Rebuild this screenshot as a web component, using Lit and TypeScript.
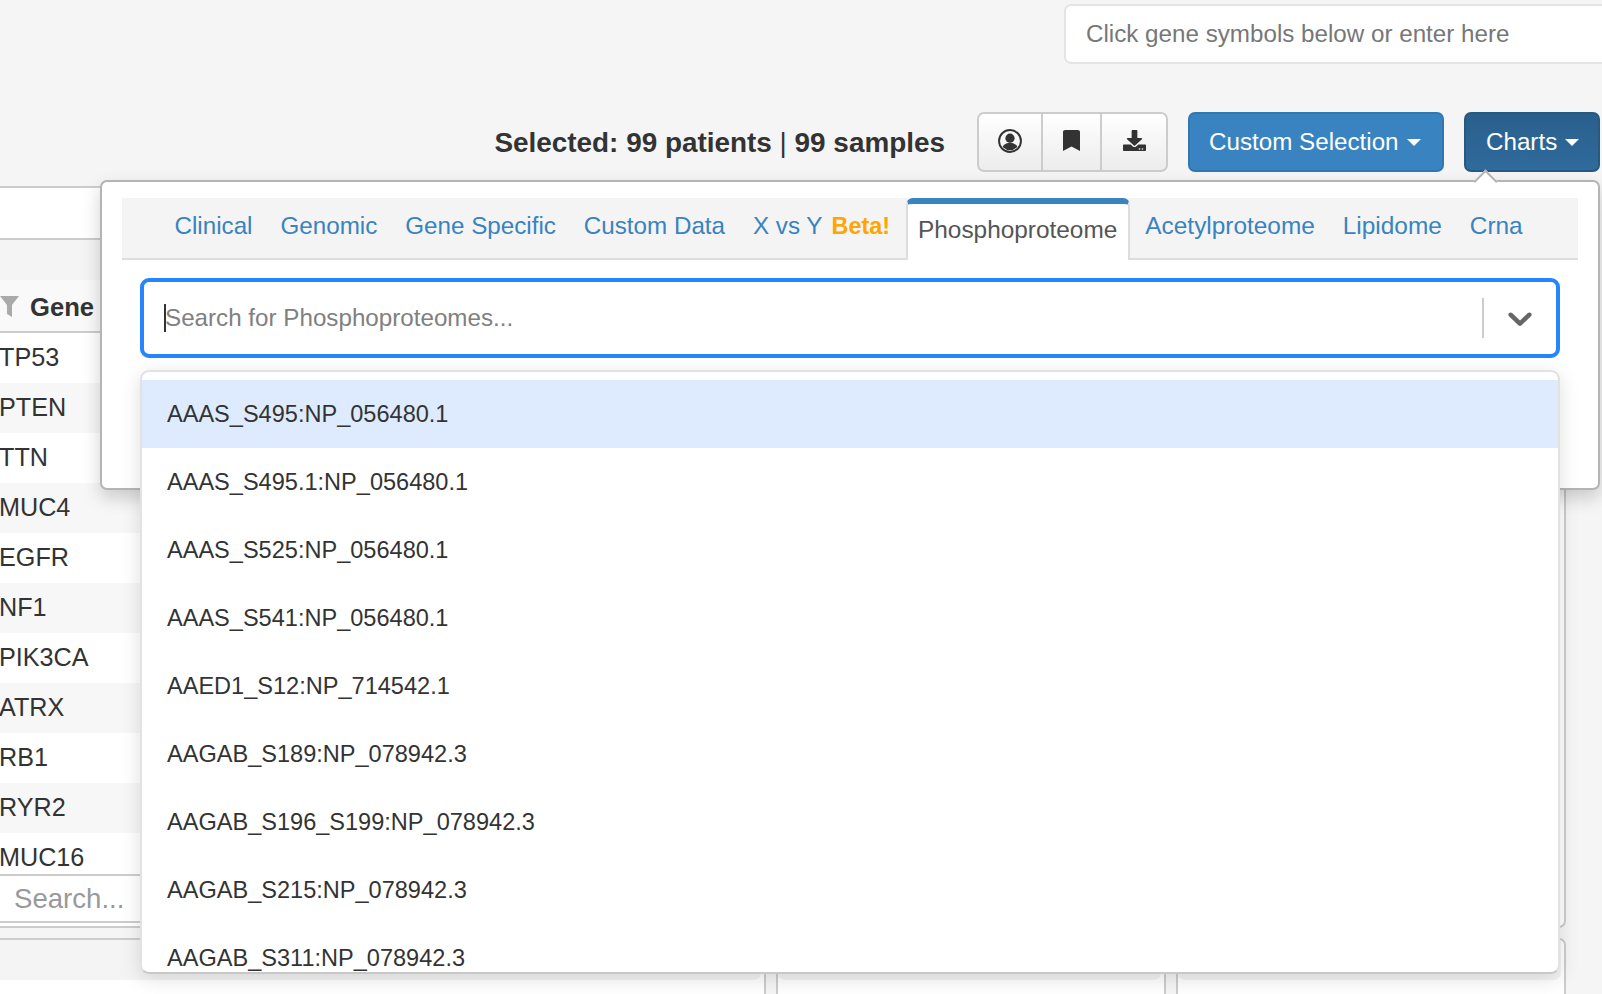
import { LitElement, html, css } from "lit";
import { customElement } from "lit/decorators.js";

const GENES = ["TP53", "PTEN", "TTN", "MUC4", "EGFR", "NF1", "PIK3CA", "ATRX", "RB1", "RYR2", "MUC16"];
const OPTIONS = [
  "AAAS_S495:NP_056480.1",
  "AAAS_S495.1:NP_056480.1",
  "AAAS_S525:NP_056480.1",
  "AAAS_S541:NP_056480.1",
  "AAED1_S12:NP_714542.1",
  "AAGAB_S189:NP_078942.3",
  "AAGAB_S196_S199:NP_078942.3",
  "AAGAB_S215:NP_078942.3",
  "AAGAB_S311:NP_078942.3",
];

@customElement("app-root")
export class AppRoot extends LitElement {
  static styles = css`
    :host {
      display: block;
      position: relative;
      width: 1602px;
      height: 994px;
      overflow: hidden;
      background: #f5f5f5;
      font-family: "Liberation Sans", Arial, sans-serif;
      color: #333;
      font-size: 24.2px;
    }
    .gene-row {
      display: flex;
      justify-content: flex-end;
      padding-top: 4px;
      height: 60px;
    }
    .gene-input {
      box-sizing: border-box;
      flex: none;
      width: 601px;
      height: 60px;
      margin-right: -63px;
      padding-left: 20px;
      display: flex;
      align-items: center;
      background: #fff;
      border: 2px solid #e4e4e4;
      border-radius: 7px;
      color: #777;
    }
    .toolbar {
      display: flex;
      justify-content: flex-end;
      align-items: center;
      height: 60px;
      margin-top: 48px;
      padding-right: 2px;
    }
    .selected {
      font-size: 27.9px;
      font-weight: bold;
      margin-right: 32px;
      padding-top: 2px;
    }
    .selected span {
      font-weight: normal;
    }
    .icon-group {
      display: flex;
      box-sizing: border-box;
      width: 191px;
      height: 60px;
      margin-right: 20px;
      border: 2px solid #ccc;
      border-radius: 7px;
      background: linear-gradient(#fff, #ececec);
    }
    .icon-btn {
      display: flex;
      align-items: center;
      justify-content: center;
      border-right: 2px solid #ccc;
    }
    .icon-btn:nth-child(1) {
      width: 62px;
    }
    .icon-btn:nth-child(2) {
      width: 57px;
    }
    .icon-btn:nth-child(3) {
      flex: 1;
      border-right: none;
    }
    .icon-btn svg {
      display: block;
      fill: #333;
      margin-bottom: 3px;
    }
    .btn {
      box-sizing: border-box;
      height: 60px;
      display: flex;
      align-items: center;
      gap: 8px;
      padding: 0 19px;
      color: #fff;
      background: #3883c0;
      border: 2px solid #3278b0;
      border-radius: 7px;
    }
    .btn.primary {
      width: 256px;
      margin-right: 20px;
    }
    .btn.active {
      width: 136px;
      padding-left: 20px;
      background: linear-gradient(#2a5f8c, #2f6b9c);
      border-color: #28597f;
    }
    .caret {
      width: 0;
      height: 0;
      border-left: 7px solid transparent;
      border-right: 7px solid transparent;
      border-top: 7px solid #fff;
    }
    .board {
      display: grid;
      grid-template-columns: 776px 390px 390px;
      grid-template-rows: 742px 100px;
      column-gap: 10px;
      row-gap: 10px;
      margin: 14px 0 0 -10px;
    }
    .card {
      position: relative;
      box-sizing: border-box;
      background: #fff;
      border: 2px solid #ccc;
      border-radius: 7px;
      overflow: hidden;
    }
    .card.lower {
      padding: 0 3px 0 0;
    }
    .band {
      height: 40px;
      background: #f4f4f4;
    }
    .lower .band {
      border-radius: 0 0 7px 7px;
    }
    .card-top {
      height: 50px;
      border-bottom: 2px solid #ccc;
    }
    .table-head {
      box-sizing: border-box;
      height: 53px;
      display: flex;
      align-items: center;
      gap: 11px;
      padding: 4px 0 0 8px;
      font-size: 25.6px;
      font-weight: bold;
      background: #f9f9f9;
      border-bottom: 2px solid #ccc;
    }
    .table-head svg {
      display: block;
      fill: #aaa;
      margin-bottom: 3px;
    }
    .rows {
      height: 541px;
      overflow: hidden;
    }
    .gene {
      box-sizing: border-box;
      height: 50px;
      padding: 0 0 2px 7px;
      display: flex;
      align-items: center;
      font-size: 25.2px;
    }
    .gene:nth-child(even) {
      background: #f7f7f7;
    }
    .search {
      box-sizing: border-box;
      height: 49px;
      padding-left: 22px;
      display: flex;
      align-items: center;
      font-size: 27.6px;
      color: #999;
      border-top: 2px solid #ccc;
      border-bottom: 2px solid #ccc;
    }
    .thumb {
      position: absolute;
      right: 4px;
      bottom: 4px;
      width: 2px;
      height: 12px;
      background: #555;
    }
    .popover {
      position: absolute;
      left: 100px;
      top: 180px;
      box-sizing: border-box;
      width: 1500px;
      height: 310px;
      padding: 16px 19px 0 20px;
      background: #fff;
      border: 2px solid #b4b4b4;
      border-radius: 7px;
      box-shadow: 0 8px 18px rgba(0, 0, 0, 0.18);
    }
    .arrow {
      position: absolute;
      left: 1375px;
      top: -9px;
      width: 15px;
      height: 15px;
      background: #fff;
      border-left: 2px solid #b4b4b4;
      border-top: 2px solid #b4b4b4;
      transform: rotate(45deg);
    }
    .tabs {
      display: flex;
      box-sizing: border-box;
      height: 62px;
      width: 1456px;
      padding-left: 41px;
      background: #f4f4f4;
      border-bottom: 2px solid #ddd;
    }
    .tab {
      display: flex;
      align-items: center;
      gap: 9px;
      padding: 0 11.5px 4px;
      margin-right: 5px;
      color: #3883c0;
      white-space: nowrap;
    }
    .tab.on ~ .tab {
      font-size: 24.4px;
    }
    .beta {
      color: #ffa500;
      font-weight: bold;
      font-size: 23.4px;
    }
    .tab.on {
      box-sizing: border-box;
      height: 62px;
      padding: 0 10.5px 4px 9.5px;
      margin-right: 4px;
      font-size: 24.4px;
      color: #555;
      background: #fff;
      border: 2px solid #ddd;
      border-top: 6px solid #3883c0;
      border-bottom: none;
      border-radius: 7px 7px 0 0;
    }
    .select {
      position: relative;
      box-sizing: border-box;
      display: flex;
      align-items: center;
      width: 1420px;
      height: 80px;
      margin: 18px 0 0 18px;
      background: #fff;
      border: 4px solid #2684ff;
      border-radius: 9px;
      font-size: 24.2px;
      color: #808080;
    }
    .cursor {
      flex: none;
      width: 2px;
      height: 28px;
      margin-left: 20px;
      margin-right: -1px;
      background: #333;
    }
    .placeholder {
      flex: 1;
    }
    .sep {
      flex: none;
      width: 2px;
      height: 40px;
      background: #ccc;
    }
    .chevron {
      flex: none;
      width: 72px;
      display: flex;
      justify-content: center;
    }
    .chevron svg {
      display: block;
      fill: #666;
    }
    .menu {
      position: absolute;
      left: -4px;
      right: -4px;
      top: 88px;
      box-sizing: border-box;
      height: 604px;
      padding-top: 8px;
      overflow: hidden;
      background: #fff;
      border: 2px solid #e2e2e2;
      border-bottom-color: #c8c8c8;
      border-radius: 9px;
      box-shadow: 0 5px 20px rgba(0, 0, 0, 0.13);
      font-size: 23.55px;
      color: #333;
    }
    .option {
      box-sizing: border-box;
      height: 68px;
      padding-left: 25px;
      display: flex;
      align-items: center;
    }
    .option.focused {
      background: #deebff;
    }
  `;

  renderLeftCard() {
    return html`
      <div class="card">
        <div class="card-top"></div>
        <div class="band"></div>
        <div class="table-head">
          <svg width="19" height="21" viewBox="0 0 19 21"><path d="M0 0h19l-7 9v12l-5-3V9z"></path></svg>
          Gene
        </div>
        <div class="rows">${GENES.map((g) => html`<div class="gene">${g}</div>`)}</div>
        <div class="search">Search...</div>
      </div>
    `;
  }

  renderPopover() {
    return html`
      <div class="popover">
        <div class="arrow"></div>
        <div class="tabs">
          <div class="tab">Clinical</div>
          <div class="tab">Genomic</div>
          <div class="tab">Gene Specific</div>
          <div class="tab">Custom Data</div>
          <div class="tab">X vs Y <span class="beta">Beta!</span></div>
          <div class="tab on">Phosphoproteome</div>
          <div class="tab">Acetylproteome</div>
          <div class="tab">Lipidome</div>
          <div class="tab">Crna</div>
        </div>
        <div class="select">
          <div class="cursor"></div>
          <div class="placeholder">Search for Phosphoproteomes...</div>
          <div class="sep"></div>
          <div class="chevron">
            <svg width="40" height="40" viewBox="0 0 20 20">
              <path d="M4.516 7.548c0.436-0.446 1.043-0.481 1.576 0l3.908 3.747 3.908-3.747c0.533-0.481 1.141-0.446 1.574 0 0.436 0.445 0.408 1.197 0 1.615-0.406 0.418-4.695 4.502-4.695 4.502-0.217 0.223-0.502 0.335-0.787 0.335s-0.57-0.112-0.789-0.335c0 0-4.287-4.084-4.695-4.502s-0.436-1.17 0-1.615z"></path>
            </svg>
          </div>
          <div class="menu">
            ${OPTIONS.map((o, i) => html`<div class="option ${i === 0 ? "focused" : ""}">${o}</div>`)}
          </div>
        </div>
      </div>
    `;
  }

  render() {
    return html`
      <div class="gene-row">
        <div class="gene-input">Click gene symbols below or enter here</div>
      </div>
      <div class="toolbar">
        <div class="selected">Selected: 99 patients <span>|</span> 99 samples</div>
        <div class="icon-group">
          <div class="icon-btn">
            <svg width="24" height="24" viewBox="0 0 25 25">
              <defs><clipPath id="ring"><circle cx="12.5" cy="12.5" r="9.6"></circle></clipPath></defs>
              <circle cx="12.5" cy="12.5" r="11.4" fill="none" stroke="#333" stroke-width="2"></circle>
              <circle cx="12.5" cy="9.6" r="4.8"></circle>
              <ellipse cx="12.5" cy="21" rx="8.6" ry="6.6" clip-path="url(#ring)"></ellipse>
            </svg>
          </div>
          <div class="icon-btn">
            <svg width="17" height="21" viewBox="0 0 384 512" preserveAspectRatio="none">
              <path d="M0 512V48C0 21.49 21.49 0 48 0h288c26.51 0 48 21.49 48 48v464L192 400 0 512z"></path>
            </svg>
          </div>
          <div class="icon-btn">
            <svg width="23" height="21" viewBox="0 0 512 512" preserveAspectRatio="none">
              <path d="M216 0h80c13.3 0 24 10.7 24 24v168h87.7c17.8 0 26.7 21.5 14.1 34.1L269.7 378.3c-7.5 7.5-19.8 7.5-27.3 0L90.1 226.1c-12.6-12.6-3.7-34.1 14.1-34.1H192V24c0-13.3 10.7-24 24-24zm296 376v112c0 13.3-10.7 24-24 24H24c-13.3 0-24-10.7-24-24V376c0-13.3 10.7-24 24-24h146.7l49 49c20.1 20.1 52.5 20.1 72.6 0l49-49H488c13.3 0 24 10.7 24 24zm-124 88c0-11-9-20-20-20s-20 9-20 20 9 20 20 20 20-9 20-20zm64 0c0-11-9-20-20-20s-20 9-20 20 9 20 20 20 20-9 20-20z"></path>
            </svg>
          </div>
        </div>
        <div class="btn primary">Custom Selection <span class="caret"></span></div>
        <div class="btn active">Charts <span class="caret"></span></div>
      </div>
      <div class="board">
        ${this.renderLeftCard()}
        <div class="card"></div>
        <div class="card"><div class="thumb"></div></div>
        <div class="card lower"><div class="band"></div></div>
        <div class="card lower"><div class="band"></div></div>
        <div class="card lower"><div class="band"></div></div>
      </div>
      ${this.renderPopover()}
    `;
  }
}
